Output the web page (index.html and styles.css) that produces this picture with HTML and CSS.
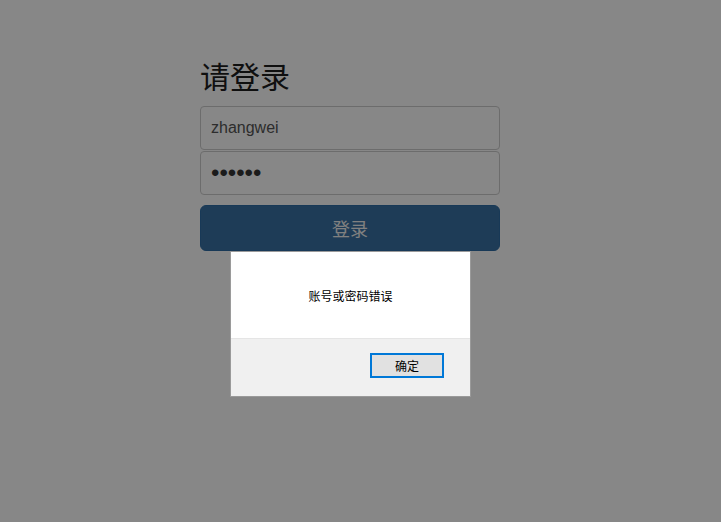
FILE: index.html
```html
<!DOCTYPE html>
<html lang="zh-CN">
<head>
    <meta charset="UTF-8">
    <title>登录</title>
    <link rel="stylesheet" href="styles.css">
</head>
<body>
<div class="container">
    <form class="form-signin">
        <h2 class="form-signin-heading">请登录</h2>
        <input type="text" class="form-control first" value="zhangwei">
        <input type="password" class="form-control last" value="123456">
        <button type="button" class="btn-login">登录</button>
    </form>
</div>
<div class="mask"></div>
<div class="alert-box">
    <div class="alert-msg">账号或密码错误</div>
    <div class="alert-foot">
        <button type="button" class="alert-ok">确定</button>
    </div>
</div>
</body>
</html>
```

FILE: styles.css
```css
body {
    margin: 0;
    background-color: #ffffff;
    font-family: "Liberation Sans", "Noto Sans CJK SC", sans-serif;
}

.container {
    padding-top: 58px;
    padding-left: 200px;
}

.form-signin {
    width: 300px;
}

.form-signin-heading {
    margin: 0 0 8px 0;
    font-size: 30px;
    font-weight: normal;
    line-height: 40px;
    color: #1e1e1e;
}

.form-control {
    display: block;
    box-sizing: border-box;
    width: 300px;
    height: 44px;
    padding: 10px;
    border: 1px solid #cccccc;
    border-radius: 4px;
    background-color: #ffffff;
    color: #555555;
    font-family: "Liberation Sans", sans-serif;
    font-size: 16px;
}

.form-control.first {
    margin-bottom: 1px;
}

.form-control.last {
    margin-bottom: 10px;
    font-size: 24px;
    color: #333333;
}

.btn-login {
    display: block;
    width: 300px;
    height: 46px;
    border: 1px solid #2e6da4;
    border-radius: 6px;
    background-color: #3a72a4;
    color: #f2f2f2;
    font-family: "Liberation Sans", "Noto Sans CJK SC", sans-serif;
    font-size: 18px;
}

/* 弹窗遮罩 */
.mask {
    position: fixed;
    left: 0;
    top: 0;
    right: 0;
    bottom: 0;
    background-color: rgba(0, 0, 0, 0.47);
}

.alert-box {
    position: absolute;
    left: 230px;
    top: 251px;
    width: 239px;
    border: 1px solid #9a9a9a;
    background-color: #ffffff;
    font-family: "Noto Sans CJK SC", sans-serif;
    font-size: 12px;
    color: #000000;
}

.alert-msg {
    height: 86px;
    line-height: 88px;
    text-align: center;
}

.alert-foot {
    height: 58px;
    border-top: 1px solid #e5e5e5;
    background-color: #f0f0f0;
    box-sizing: border-box;
    padding: 14px 26px 0 0;
    text-align: right;
}

.alert-ok {
    width: 74px;
    height: 25px;
    border: 2px solid #0078d7;
    background-color: #e1e1e1;
    font-family: "Noto Sans CJK SC", sans-serif;
    font-size: 12px;
    color: #000000;
    padding: 0;
}
```
